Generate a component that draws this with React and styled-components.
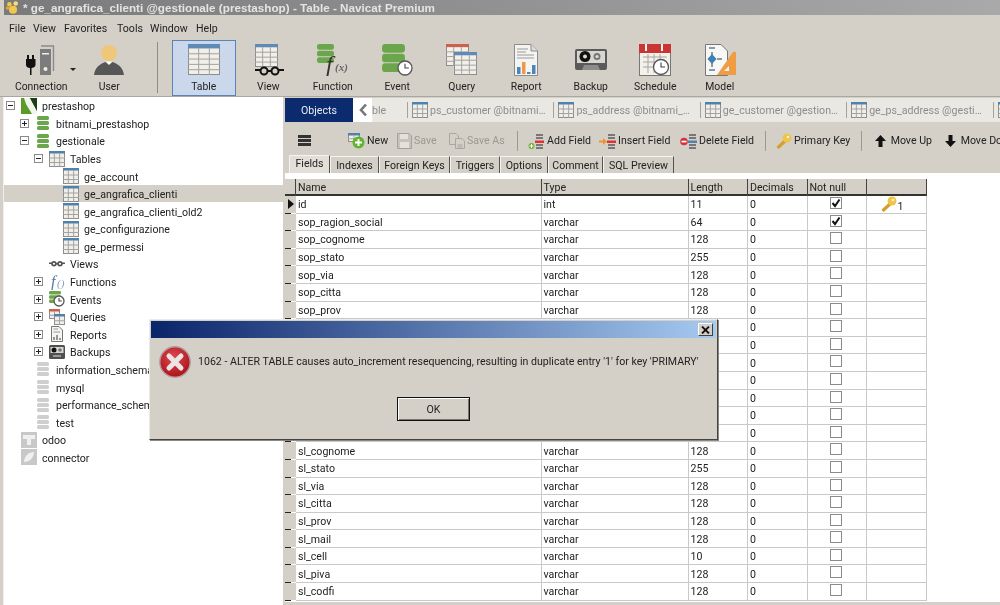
import React from 'react';
import styled, { createGlobalStyle } from 'styled-components';

const FONT = 'Roboto, "Liberation Sans", Arial, sans-serif';

const GlobalStyle = createGlobalStyle`
  html, body { margin: 0; padding: 0; background: #d4d0c8; }
  * { box-sizing: border-box; }
`;

// the reference is a soft jpeg, a touch of blur keeps the text from looking too crisp
const Window = styled.div`
  position: relative;
  width: 1000px;
  height: 605px;
  overflow: hidden;
  background: #d4d0c8;
  font: 10.6px ${FONT};
  color: #222;
  display: flex;
  flex-direction: column;
  filter: blur(0.3px);
`;

const TitleBar = styled.div`
  height: 15px;
  margin-left: 4px;
  background: linear-gradient(90deg, #7a7a7a, #a9a9a9);
  color: #e4e4e4;
  font: bold 11.7px "Liberation Sans", Arial, sans-serif;
  display: flex;
  align-items: center;
  gap: 1px;
  white-space: nowrap;
  overflow: hidden;
`;

const MenuBar = styled.div`
  height: 23px;
  padding-top: 3px;
  display: flex;
  align-items: center;
`;

const MenuItem = styled.span`
  width: ${(p) => p.$w}px;
  &:first-child { margin-left: 9px; }
`;

const Toolbar = styled.div`
  height: 59px;
  padding: 2px 0 0 9px;
  display: flex;
  align-items: stretch;
  border-bottom: 1px solid #aaa7a0;
`;

const ToolButton = styled.div`
  position: relative;
  width: 64.5px;
  height: 56px;
  margin-left: ${(p) => p.$ml || 0}px;
  padding-top: 4px;
  display: flex;
  flex-direction: column;
  align-items: center;
  border: 1px solid ${(p) => (p.$active ? '#5c83b4' : 'transparent')};
  background: ${(p) => (p.$active ? '#cbd8ec' : 'transparent')};
  svg { flex: none; margin-top: -1px; }
`;

const ToolLabel = styled.span`
  margin-top: 4px;
  line-height: 14px;
  font-size: 10.4px;
  white-space: nowrap;
`;

const Caret = styled.span`
  position: absolute;
  right: -3px;
  top: 27px;
  border: 3px solid transparent;
  border-top: 3px solid #222;
`;

const VSep = styled.div`
  width: 1px;
  margin: 2px 14px 3px 15px;
  background: #8f8c85;
`;

const Body = styled.div`
  flex: 1;
  min-height: 0;
  display: flex;
  padding-left: 3px;
`;

const Sidebar = styled.div`
  width: 280px;
  background: #fff;
  border-left: 1px solid #eee;
`;

const TreeRow = styled.div`
  height: 17.58px;
  display: flex;
  align-items: center;
  white-space: nowrap;
  padding-left: ${(p) => 2 + p.$level * 14}px;
  background: ${(p) => (p.$selected ? '#d4d0c8' : 'transparent')};
`;

const TreeLabel = styled.span`
  padding-top: 2px;
`;

const Expander = styled.span`
  position: relative;
  flex: none;
  width: 9px;
  height: 9px;
  margin-right: 6px;
  border: 1px solid ${(p) => (p.$kind ? '#8a8a8a' : 'transparent')};
  background: ${(p) => (p.$kind ? '#fff' : 'transparent')};
  &::before {
    content: '';
    display: ${(p) => (p.$kind ? 'block' : 'none')};
    position: absolute;
    left: 1px;
    right: 1px;
    top: 3px;
    height: 1px;
    background: #222;
  }
  &::after {
    content: '';
    display: ${(p) => (p.$kind === 'plus' ? 'block' : 'none')};
    position: absolute;
    top: 1px;
    bottom: 1px;
    left: 3px;
    width: 1px;
    background: #222;
  }
`;

const TreeIcon = styled.span`
  flex: none;
  width: 16px;
  height: 16px;
  margin-right: 5px;
  display: flex;
  svg { display: block; }
`;

const Main = styled.div`
  flex: 1;
  min-width: 0;
  margin-left: 2px;
  padding: 1px 0 3px;
  display: flex;
  flex-direction: column;
`;

const DocBar = styled.div`
  height: 24px;
  flex: none;
  display: flex;
  background: #eae8e3;
  color: #8d8d8d;
  white-space: nowrap;
  overflow: hidden;
`;

const ObjectsTab = styled.div`
  flex: none;
  width: 68px;
  background: #0c2a6e;
  color: #e8ecf4;
  text-align: center;
  line-height: 26px;
`;

const Chevron = styled.div`
  flex: none;
  width: 19px;
  background: #fff;
  display: flex;
  align-items: center;
  justify-content: center;
`;

const DocTab = styled.div`
  flex: none;
  width: ${(p) => p.$w || 146.4}px;
  padding-left: ${(p) => (p.$clip ? 0 : 4)}px;
  display: flex;
  align-items: center;
  gap: 2px;
  overflow: hidden;
  position: relative;
  &::after {
    content: '';
    position: absolute;
    right: 0;
    top: 4px;
    bottom: 4px;
    width: 1px;
    background: #a5a29c;
  }
`;

const ActionBar = styled.div`
  height: 31px;
  flex: none;
  padding: 6px 0 0 13px;
  display: flex;
  align-items: center;
  white-space: nowrap;
  overflow: hidden;
`;

const Action = styled.div`
  flex: none;
  width: ${(p) => p.$w}px;
  display: flex;
  align-items: center;
  gap: 2px;
  color: ${(p) => (p.$off ? '#9b9890' : '#222')};
  svg { flex: none; }
`;

const ActionSep = styled.div`
  flex: none;
  width: 1px;
  height: 20px;
  margin: 0 ${(p) => p.$r}px 0 ${(p) => p.$l}px;
  background: #9c9991;
`;

const Burger = styled.div`
  flex: none;
  width: 13px;
  height: 11px;
  margin-right: 37px;
  border-top: 3px solid #333;
  border-bottom: 3px solid #333;
  position: relative;
  &::after {
    content: '';
    position: absolute;
    left: 0;
    right: 0;
    top: 1px;
    height: 3px;
    background: #333;
  }
`;

const TabStrip = styled.div`
  height: 20px;
  flex: none;
  padding-left: 4px;
  display: flex;
  align-items: flex-end;
  white-space: nowrap;
`;

const SubTab = styled.div`
  flex: none;
  width: ${(p) => p.$w}px;
  height: ${(p) => (p.$active ? 18 : 17)}px;
  line-height: ${(p) => (p.$active ? 16 : 18)}px;
  text-align: center;
  background: ${(p) => (p.$active ? '#e2dfd9' : '#d4d0c8')};
  border-top: 1px solid #f4f3ef;
  border-left: 1px solid #f4f3ef;
  border-right: 1px solid #55534e;
`;

const GridPanel = styled.div`
  flex: 1;
  min-height: 0;
  background: #fff;
  padding-top: 6px;
`;

const COLUMNS = '11px 245.5px 147px 59.5px 59.5px 59px 60px';

const HeaderRow = styled.div`
  display: grid;
  grid-template-columns: ${COLUMNS};
  width: 641px;
  height: 17px;
  background: #d4d0c8;
  border-bottom: 2px solid #333;
`;

const HeaderCell = styled.div`
  padding-left: 2px;
  line-height: 17px;
  border-right: 1px solid #45433f;
  white-space: nowrap;
`;

const RowHead = styled.div`
  position: relative;
  background: #d4d0c8;
  border-bottom: 1px solid #fff;
  &::after {
    content: '';
    position: absolute;
    left: 0;
    bottom: -1px;
    width: 6px;
    height: 1px;
    background: #222;
  }
`;

const Pointer = styled.span`
  position: absolute;
  left: 3px;
  top: 3px;
  border: 5px solid transparent;
  border-left: 6px solid #111;
  border-right: 0;
`;

const DataRow = styled.div`
  display: grid;
  grid-template-columns: ${COLUMNS};
  width: 641px;
  height: 17.6px;
`;

const Cell = styled.div`
  padding: ${(p) => (p.$center ? '0 4px 0 2px' : '2px 0 0 2px')};
  line-height: 14px;
  border-right: 1px solid #c9c9c9;
  border-bottom: 1px solid #c9c9c9;
  white-space: nowrap;
  overflow: hidden;
  display: flex;
  align-items: ${(p) => (p.$center ? 'flex-start' : 'center')};
  justify-content: ${(p) => (p.$center ? 'center' : 'flex-start')};
`;

const KeyCell = styled(Cell)`
  padding: 0 0 0 14px;
  gap: 1px;
  align-items: flex-start;
  line-height: 22px;
`;

const Check = styled.span`
  width: 12px;
  height: 12px;
  margin-top: 1px;
  border: 1px solid #8b8b8b;
  background: #fff;
  display: flex;
  svg { display: block; }
`;

const Dialog = styled.div`
  position: absolute;
  left: 149px;
  top: 319px;
  width: 569px;
  height: 121px;
  background: #d4d0c8;
  border: 1px solid #45433f;
  border-top-color: #ecebe7;
  border-left-color: #ecebe7;
  box-shadow: 1px 1px 0 #888;
  padding: 1px;
  display: flex;
  flex-direction: column;
`;

const DialogTitle = styled.div`
  height: 17px;
  background: linear-gradient(90deg, #0a246a, #a6caf0);
  display: flex;
  justify-content: flex-end;
  align-items: center;
  padding-right: 3px;
`;

const CloseButton = styled.div`
  width: 15px;
  height: 13px;
  background: #d4d0c8;
  border: 1px solid;
  border-color: #fff #404040 #404040 #fff;
  display: flex;
  align-items: center;
  justify-content: center;
`;

const DialogBody = styled.div`
  height: 41px;
  padding: 8px 0 0 8px;
  display: flex;
  align-items: flex-start;
  gap: 7px;
  white-space: nowrap;
`;

const DialogText = styled.span`
  margin-top: 9px;
  line-height: 14px;
`;

const DialogFooter = styled.div`
  margin-top: 18px;
  display: flex;
  justify-content: center;
`;

const OkButton = styled.div`
  width: 73px;
  height: 24px;
  line-height: 23px;
  text-align: center;
  background: #d4d0c8;
  border: 1px solid #111;
  box-shadow: inset 1px 1px 0 #fff, inset -1px -1px 0 #77746d;
`;

/* icons */

const GridIcon = ({ w = 16, h = 16, head = '#4f81ad', cols = 3, rows = 3, x = 0, y = 0, nested }) => {
  const hh = Math.max(2.5, h / 7);
  const cx = Array.from({ length: cols - 1 }, (_, i) => x + ((i + 1) * w) / cols);
  const cy = Array.from({ length: rows - 1 }, (_, i) => y + hh + ((i + 1) * (h - hh)) / rows);
  const content = (
    <>
      <rect x={x + 0.5} y={y + 0.5} width={w - 1} height={h - 1} fill="#f1efe8" stroke="#8d8d8d" />
      {cx.map((v) => <line key={v} x1={v} x2={v} y1={y + hh} y2={y + h} stroke="#a3a3a3" />)}
      {cy.map((v) => <line key={v} y1={v} y2={v} x1={x} x2={x + w} stroke="#a3a3a3" />)}
      <rect x={x} y={y} width={w} height={hh} fill={head} />
    </>
  );
  if (nested) return content;
  return <svg width={w} height={h} viewBox={`0 0 ${w} ${h}`} style={{ flex: 'none' }}>{content}</svg>;
};

const Big = ({ children, w = 32 }) => <svg width={w} height="32" viewBox="0 0 32 32">{children}</svg>;

const DbStack = ({ x, y, w, h, color = '#6ca64c' }) => {
  const ph = h / 3 - 0.6;
  return (
    <g fill={color}>
      {[0, 1, 2].map((i) => (
        <rect key={i} x={x} y={y + i * (ph + 0.9)} width={w} height={ph} rx={ph / 2.6} />
      ))}
    </g>
  );
};

const Clock = ({ cx, cy, r }) => (
  <g>
    <circle cx={cx} cy={cy} r={r} fill="#fff" stroke="#555" strokeWidth="1.3" />
    <path d={`M${cx} ${cy - r * 0.6}V${cy}H${cx + r * 0.55}`} fill="none" stroke="#444" strokeWidth="1.1" />
  </g>
);

const ConnectionIcon = () => (
  <Big>
    <path d="M28.5 2V27M16 2H29" stroke="#8a8a8a" strokeWidth="1.4" fill="none" />
    <rect x="15" y="5" width="11" height="26" fill="#7c7c7c" />
    <rect x="17" y="9" width="7" height="1.5" fill="#eee" />
    <circle cx="20.5" cy="25" r="2" fill="#eee" />
    <path d="M2 11H4V15H7V11H9V15H10.5V21C10.5 23 8 24 6.5 24V31H5V24C3 24 1 23 1 21V15H2Z" fill="#111" />
  </Big>
);

const UserIcon = () => (
  <Big>
    <circle cx="16" cy="9" r="8" fill="#efc77a" />
    <path d="M1 31C2 23 7 20 12.5 18L16 21L19.5 18C25 20 30 23 31 31Z" fill="#565656" />
    <path d="M13 17.5H19L16 20.5Z" fill="#fff" />
  </Big>
);

const TableBigIcon = () => (
  <Big><GridIcon nested x={0} y={0} w={32} h={31} cols={3} rows={5} head="#5f8ab5" /></Big>
);

const GlassesPair = ({ x, y, s = 1, sw = 2, color = '#111' }) => (
  <g transform={`translate(${x} ${y}) scale(${s})`} fill="none" stroke={color} strokeWidth={sw}>
    <circle cx="9" cy="5" r="3.5" />
    <circle cx="20" cy="5" r="3.5" />
    <path d="M12.5 5H16.5M5.5 4H0M23.5 4H29" />
  </g>
);

const ViewIcon = () => (
  <Big>
    <GridIcon nested x={3} y={0} w={23} h={23} cols={3} rows={4} head="#5f8ab5" />
    <GlassesPair x={3} y={22} />
  </Big>
);

const FunctionIcon = () => (
  <Big>
    <DbStack x={0} y={0} w={17} h={19} />
    <text x="9" y="28" fontFamily='"Liberation Serif", serif' fontStyle="italic" fontSize="24" fill="#333">f</text>
    <text x="18" y="27" fontFamily='"Liberation Serif", serif' fontStyle="italic" fontSize="11" fontWeight="bold" fill="#666">(x)</text>
  </Big>
);

const EventIcon = () => (
  <Big>
    <DbStack x={1} y={0} w={23} h={28} />
    <Clock cx={24} cy={24} r={7} />
  </Big>
);

const QueryIcon = () => (
  <Big>
    <GridIcon nested x={0} y={0} w={23} h={22} cols={3} rows={4} head="#c9634d" />
    <GridIcon nested x={8} y={8} w={23} h={23} cols={3} rows={4} head="#5f8ab5" />
  </Big>
);

const ReportIcon = () => (
  <Big>
    <path d="M4.5 0.5H21L27.5 7V31.5H4.5Z" fill="#f4f4f2" stroke="#8b8b8b" />
    <path d="M21 0.5V7H27.5" fill="#ddd" stroke="#8b8b8b" />
    <path d="M7 5H18M7 8H16M7 11H24M7 14H24" stroke="#9a9a9a" strokeWidth="1.2" />
    <rect x="7" y="23" width="3.5" height="7" fill="#4d85b6" />
    <rect x="12" y="18" width="3.5" height="12" fill="#ec9a4a" />
    <rect x="17" y="28" width="3.5" height="2" fill="#4d85b6" />
    <rect x="22" y="21" width="3.5" height="9" fill="#4d85b6" />
  </Big>
);

const BackupIcon = () => (
  <Big>
    <rect x="0" y="5" width="32" height="21" rx="2" fill="#5a5a5a" />
    <rect x="2" y="7" width="28" height="12" fill="#d8d6d0" />
    <circle cx="10" cy="12.5" r="5.5" fill="#111" />
    <circle cx="10" cy="12.5" r="2" fill="#ddd" />
    <circle cx="22" cy="12.5" r="3.5" fill="#777" />
    <circle cx="22" cy="12.5" r="1.6" fill="#ddd" />
    <path d="M7 26L9 21H23L25 26Z" fill="#8c8c8c" />
  </Big>
);

const ScheduleIcon = () => (
  <Big>
    <rect x="0.5" y="8" width="31" height="23.5" fill="#f3f1ea" stroke="#777" />
    <rect x="0" y="0" width="32" height="9" fill="#c93434" />
    <path d="M7 0V7M23 0V7" stroke="#f4f4f4" strokeWidth="2" />
    <path d="M4 13H28M4 18H28M4 23H28M9 10V29M15 10V29M21 10V29" stroke="#a5a5a5" />
    <Clock cx={22} cy={23} r={7.5} />
  </Big>
);

const ModelIcon = () => (
  <Big>
    <path d="M1.5 0.5H17L23.5 7V31.5H1.5Z" fill="#f7f7f5" stroke="#777" />
    <path d="M5 4H11M8 8V23M5 26H11M13 15H18" stroke="#8a9aa8" strokeWidth="2" />
    <path d="M8 10L12.5 15L8 20L3.5 15Z" fill="#3f7fb5" />
    <path d="M29 8H32V31H13Z" fill="#ef9c45" />
    <path d="M25 22V27H20Z" fill="#f7f2e8" />
  </Big>
);

const AppIcon = () => (
  <svg width="18" height="15" viewBox="0 0 20 15" style={{ flex: 'none' }}>
    <circle cx="10" cy="10" r="4.5" fill="#f0c850" />
    <circle cx="6" cy="4" r="2.5" fill="#f0c850" />
    <circle cx="13" cy="3" r="2.5" fill="#f6dc80" />
    <circle cx="4" cy="8" r="2" fill="#e0a830" />
  </svg>
);

const Small = ({ children, w = 16, h = 16 }) => (
  <svg width={w} height={h} viewBox={`0 0 ${w} ${h}`}>{children}</svg>
);

const PrestaIcon = () => (
  <Small>
    <rect width="16" height="16" fill="#5c9b2b" />
    <path d="M3 0H9L16 13V16H11L5 6Z" fill="#fff" opacity=".9" />
    <path d="M9 0H16V13Z" fill="#1f3d14" />
  </Small>
);

const DbIcon = ({ color }) => (
  <Small>
    <DbStack x={2} y={1} w={12} h={14} color={color} />
  </Small>
);

const GlassesIcon = () => (
  <Small><GlassesPair x={0} y={5} s={0.55} sw={3} color="#555" /></Small>
);

const FnIcon = () => (
  <Small>
    <text x="2" y="13" fontFamily='"Liberation Serif", serif' fontStyle="italic" fontSize="16" fill="#5578a8">f</text>
    <text x="8" y="13" fontFamily='"Liberation Serif", serif' fontStyle="italic" fontSize="11" fill="#8aa0bd">()</text>
  </Small>
);

const EventsIcon = () => (
  <Small>
    <DbStack x={0} y={0} w={12} h={12} />
    <Clock cx={10} cy={10} r={5} />
  </Small>
);

const QueriesIcon = () => (
  <Small>
    <GridIcon nested x={0} y={0} w={11} h={10} cols={2} rows={2} head="#c9634d" />
    <GridIcon nested x={5} y={5} w={11} h={11} cols={2} rows={2} head="#4f81ad" />
  </Small>
);

const ReportsIcon = () => (
  <Small>
    <path d="M2.5 0.5H10L13.5 4V15.5H2.5Z" fill="#f4f4f2" stroke="#777" />
    <path d="M4.5 3H9M4.5 6H11" stroke="#999" />
    <path d="M5 14V11M8 14V9M11 14V12" stroke="#777" strokeWidth="1.5" />
  </Small>
);

const BackupsIcon = () => (
  <Small>
    <rect x="0" y="1" width="16" height="14" rx="1.5" fill="#4f4f4f" />
    <rect x="1.5" y="3" width="13" height="6" fill="#d8d6d0" />
    <circle cx="5" cy="6" r="2.5" fill="#111" />
    <circle cx="11" cy="6" r="1.8" fill="#777" />
    <rect x="4" y="11" width="8" height="2" fill="#999" />
  </Small>
);

const OdooIcon = () => (
  <Small>
    <rect width="16" height="16" fill="#c8c8c8" />
    <path d="M2 3H14V7H10V13H6V7H2Z" fill="#f0f0f0" />
  </Small>
);

const ConnectorIcon = () => (
  <Small>
    <rect width="16" height="16" fill="#c8c8c8" />
    <path d="M3 13C3 7 8 3 13 3C13 8 9 13 3 13Z" fill="#f0f0f0" />
  </Small>
);

const ChevronIcon = () => (
  <svg width="10" height="14" viewBox="0 0 10 14">
    <path d="M8 1.5L3 7L8 12.5" fill="none" stroke="#777" strokeWidth="2.6" />
  </svg>
);

const KeyIcon = ({ size = 16 }) => (
  <svg width={size} height={size} viewBox="0 0 16 16">
    <path d="M9 8L2.5 14" stroke="#d3a02a" strokeWidth="3.2" strokeLinecap="round" />
    <circle cx="11" cy="5" r="4.5" fill="#eec44a" />
    <circle cx="12" cy="4" r="1.3" fill="#fff3c4" />
  </svg>
);

const NewIcon = () => (
  <Small w={17}>
    <GridIcon nested x={0} y={0} w={12} h={9} cols={2} rows={2} head="#4f81ad" />
    <circle cx="10.5" cy="9.5" r="6" fill="#62b32d" />
    <path d="M10.5 6V13M7 9.5H14" stroke="#fff" strokeWidth="2" />
  </Small>
);

const SaveIcon = () => (
  <Small w={15}>
    <path d="M0.5 0.5H12L14.5 3V15.5H0.5Z" fill="#c6c3bb" stroke="#a5a29b" />
    <rect x="3" y="1" width="8" height="5" fill="#e3e1da" />
    <rect x="3" y="9" width="9" height="6" fill="#e3e1da" />
  </Small>
);

const SaveAsIcon = () => (
  <Small>
    <path d="M0.5 0.5H7L9.5 3V11.5H0.5Z" fill="none" stroke="#aaa79f" />
    <path d="M6.5 5.5H13L15.5 8V15.5H6.5Z" fill="#d4d0c8" stroke="#aaa79f" />
    <rect x="8.5" y="11" width="5" height="4" fill="#bdbab2" />
  </Small>
);

const FieldLines = ({ x, red }) => (
  <g>
    <path d={`M${x} 2H${x + 7}M${x} 5H${x + 7}M${x} 12H${x + 7}M${x} 15H${x + 7}`} stroke="#777" strokeWidth="2" />
    <rect x={x - 1} y={7.5} width={9} height={2.5} fill={red} />
  </g>
);

const AddFieldIcon = () => (
  <Small w={17}>
    <FieldLines x={8} red="#d33" />
    <circle cx="3.5" cy="13" r="3" fill="#6eb437" />
    <path d="M3.5 11V15M1.5 13H5.5" stroke="#fff" />
  </Small>
);

const InsertFieldIcon = () => (
  <Small w={17}>
    <FieldLines x={9} red="#d33" />
    <path d="M0 7.5H4V5L8 8.5L4 12V9.5H0Z" fill="#ee9530" />
  </Small>
);

const DeleteFieldIcon = () => (
  <Small w={17}>
    <FieldLines x={9} red="#4f81ad" />
    <circle cx="4" cy="8.5" r="3.8" fill="#d6303a" />
    <rect x="1.5" y="7.7" width="5" height="1.7" fill="#fff" />
  </Small>
);

const ArrowIcon = ({ down }) => (
  <svg width="11" height="12" viewBox="0 0 11 12" style={down ? { transform: 'rotate(180deg)' } : undefined}>
    <path d="M5.5 0L11 6H7.5V12H3.5V6H0Z" fill="#111" />
  </svg>
);

const ErrorIcon = () => (
  <svg width="32" height="32" viewBox="0 0 32 32" style={{ flex: 'none' }}>
    <defs>
      <radialGradient id="errorFill" cx="45%" cy="35%" r="70%">
        <stop offset="0" stopColor="#dc4a50" />
        <stop offset="1" stopColor="#a80f18" />
      </radialGradient>
    </defs>
    <circle cx="16" cy="16" r="15.2" fill="url(#errorFill)" stroke="#b39c9c" strokeWidth="1.4" />
    <path d="M10 10L22 22M22 10L10 22" stroke="#ece4e2" strokeWidth="5" strokeLinecap="round" />
  </svg>
);

/* data */

const TREE = [
  { level: 0, exp: 'minus', icon: <PrestaIcon />, label: 'prestashop' },
  { level: 1, exp: 'plus', icon: <DbIcon />, label: 'bitnami_prestashop' },
  { level: 1, exp: 'minus', icon: <DbIcon />, label: 'gestionale' },
  { level: 2, exp: 'minus', icon: <GridIcon />, label: 'Tables' },
  { level: 3, icon: <GridIcon />, label: 'ge_account' },
  { level: 3, icon: <GridIcon />, label: 'ge_angrafica_clienti', selected: true },
  { level: 3, icon: <GridIcon />, label: 'ge_angrafica_clienti_old2' },
  { level: 3, icon: <GridIcon />, label: 'ge_configurazione' },
  { level: 3, icon: <GridIcon />, label: 'ge_permessi' },
  { level: 2, icon: <GlassesIcon />, label: 'Views' },
  { level: 2, exp: 'plus', icon: <FnIcon />, label: 'Functions' },
  { level: 2, exp: 'plus', icon: <EventsIcon />, label: 'Events' },
  { level: 2, exp: 'plus', icon: <QueriesIcon />, label: 'Queries' },
  { level: 2, exp: 'plus', icon: <ReportsIcon />, label: 'Reports' },
  { level: 2, exp: 'plus', icon: <BackupsIcon />, label: 'Backups' },
  { level: 1, icon: <DbIcon color="#cfcfcf" />, label: 'information_schema' },
  { level: 1, icon: <DbIcon color="#cfcfcf" />, label: 'mysql' },
  { level: 1, icon: <DbIcon color="#cfcfcf" />, label: 'performance_schema' },
  { level: 1, icon: <DbIcon color="#cfcfcf" />, label: 'test' },
  { level: 0, icon: <OdooIcon />, label: 'odoo' },
  { level: 0, icon: <ConnectorIcon />, label: 'connector' },
];

const MENUS = [['File', 24], ['View', 31], ['Favorites', 53], ['Tools', 33], ['Window', 46], ['Help', 30]];

const TOOLS = [
  { label: 'View', icon: <ViewIcon /> },
  { label: 'Function', icon: <FunctionIcon /> },
  { label: 'Event', icon: <EventIcon /> },
  { label: 'Query', icon: <QueryIcon /> },
  { label: 'Report', icon: <ReportIcon /> },
  { label: 'Backup', icon: <BackupIcon /> },
  { label: 'Schedule', icon: <ScheduleIcon /> },
  { label: 'Model', icon: <ModelIcon /> },
];

const DOCS = ['ps_customer @bitnami…', 'ps_address @bitnami_…', 'ge_customer @gestion…', 'ge_ps_address @gesti…'];

const SUBTABS = [['Fields', 41], ['Indexes', 49], ['Foreign Keys', 71], ['Triggers', 50], ['Options', 48], ['Comment', 55], ['SQL Preview', 71]];

const HEADERS = ['', 'Name', 'Type', 'Length', 'Decimals', 'Not null', ''];

// rows 7-13 sit behind the error dialog, so only the right hand columns show
const hidden = { name: '', type: '', len: '' };
const FIELDS = [
  { name: 'id', type: 'int', len: '11', checked: true, primary: true },
  { name: 'sop_ragion_social', type: 'varchar', len: '64', checked: true },
  { name: 'sop_cognome', type: 'varchar', len: '128' },
  { name: 'sop_stato', type: 'varchar', len: '255' },
  { name: 'sop_via', type: 'varchar', len: '128' },
  { name: 'sop_citta', type: 'varchar', len: '128' },
  { name: 'sop_prov', type: 'varchar', len: '128' },
  hidden, hidden, hidden, hidden, hidden, hidden, hidden,
  { name: 'sl_cognome', type: 'varchar', len: '128' },
  { name: 'sl_stato', type: 'varchar', len: '255' },
  { name: 'sl_via', type: 'varchar', len: '128' },
  { name: 'sl_citta', type: 'varchar', len: '128' },
  { name: 'sl_prov', type: 'varchar', len: '128' },
  { name: 'sl_mail', type: 'varchar', len: '128' },
  { name: 'sl_cell', type: 'varchar', len: '10' },
  { name: 'sl_piva', type: 'varchar', len: '128' },
  { name: 'sl_codfi', type: 'varchar', len: '128' },
];

const App = () => (
  <Window>
    <GlobalStyle />
    <TitleBar>
      <AppIcon />
      * ge_angrafica_clienti @gestionale (prestashop) - Table - Navicat Premium
    </TitleBar>
    <MenuBar>
      {MENUS.map(([label, w]) => <MenuItem key={label} $w={w}>{label}</MenuItem>)}
    </MenuBar>
    <Toolbar>
      <ToolButton>
        <ConnectionIcon />
        <ToolLabel>Connection</ToolLabel>
        <Caret />
      </ToolButton>
      <ToolButton $ml={3.5}>
        <UserIcon />
        <ToolLabel>User</ToolLabel>
      </ToolButton>
      <VSep />
      <ToolButton $active>
        <TableBigIcon />
        <ToolLabel>Table</ToolLabel>
      </ToolButton>
      {TOOLS.map((t) => (
        <ToolButton key={t.label}>
          {t.icon}
          <ToolLabel>{t.label}</ToolLabel>
        </ToolButton>
      ))}
    </Toolbar>
    <Body>
      <Sidebar>
        {TREE.map((n) => (
          <TreeRow key={n.label} $level={n.level} $selected={n.selected}>
            <Expander $kind={n.exp} />
            <TreeIcon>{n.icon}</TreeIcon>
            <TreeLabel>{n.label}</TreeLabel>
          </TreeRow>
        ))}
      </Sidebar>
      <Main>
        <DocBar>
          <ObjectsTab>Objects</ObjectsTab>
          <Chevron><ChevronIcon /></Chevron>
          <DocTab $w={36} $clip>ble</DocTab>
          {DOCS.map((d) => (
            <DocTab key={d}><GridIcon />{d}</DocTab>
          ))}
          <DocTab><GridIcon /></DocTab>
        </DocBar>
        <ActionBar>
          <Burger />
          <Action $w={49}><NewIcon />New</Action>
          <Action $w={52} $off><SaveIcon />Save</Action>
          <Action $w={60} $off><SaveAsIcon />Save As</Action>
          <ActionSep $l={8} $r={10} />
          <Action $w={71}><AddFieldIcon />Add Field</Action>
          <Action $w={81}><InsertFieldIcon />Insert Field</Action>
          <Action $w={80}><DeleteFieldIcon />Delete Field</Action>
          <ActionSep $l={5} $r={10} />
          <Action $w={79}><KeyIcon />Primary Key</Action>
          <ActionSep $l={6} $r={13} />
          <Action $w={70}><ArrowIcon />&nbsp;Move Up</Action>
          <Action $w={70}><ArrowIcon down />&nbsp;Move Down</Action>
        </ActionBar>
        <TabStrip>
          {SUBTABS.map(([label, w], i) => (
            <SubTab key={label} $w={w} $active={i === 0}>{label}</SubTab>
          ))}
        </TabStrip>
        <GridPanel>
          <HeaderRow>
            {HEADERS.map((h, i) => (
              <HeaderCell key={i}>{h}</HeaderCell>
            ))}
          </HeaderRow>
          {FIELDS.map((f, i) => (
            <DataRow key={i}>
              <RowHead>{i === 0 && <Pointer />}</RowHead>
              <Cell>{f.name}</Cell>
              <Cell>{f.type}</Cell>
              <Cell>{f.len}</Cell>
              <Cell>0</Cell>
              <Cell $center>
                <Check>
                  {f.checked && (
                    <svg width="10" height="10" viewBox="0 0 10 10">
                      <path d="M1.5 5L4 8L8.5 1.5" fill="none" stroke="#111" strokeWidth="2" />
                    </svg>
                  )}
                </Check>
              </Cell>
              {f.primary ? <KeyCell><KeyIcon />1</KeyCell> : <Cell />}
            </DataRow>
          ))}
        </GridPanel>
      </Main>
    </Body>
    <Dialog>
      <DialogTitle>
        <CloseButton>
          <svg width="9" height="8" viewBox="0 0 9 8">
            <path d="M1 0.5L8 7.5M8 0.5L1 7.5" stroke="#111" strokeWidth="1.8" />
          </svg>
        </CloseButton>
      </DialogTitle>
      <DialogBody>
        <ErrorIcon />
        <DialogText>1062 - ALTER TABLE causes auto_increment resequencing, resulting in duplicate entry '1' for key 'PRIMARY'</DialogText>
      </DialogBody>
      <DialogFooter>
        <OkButton>OK</OkButton>
      </DialogFooter>
    </Dialog>
  </Window>
);

export default App;
